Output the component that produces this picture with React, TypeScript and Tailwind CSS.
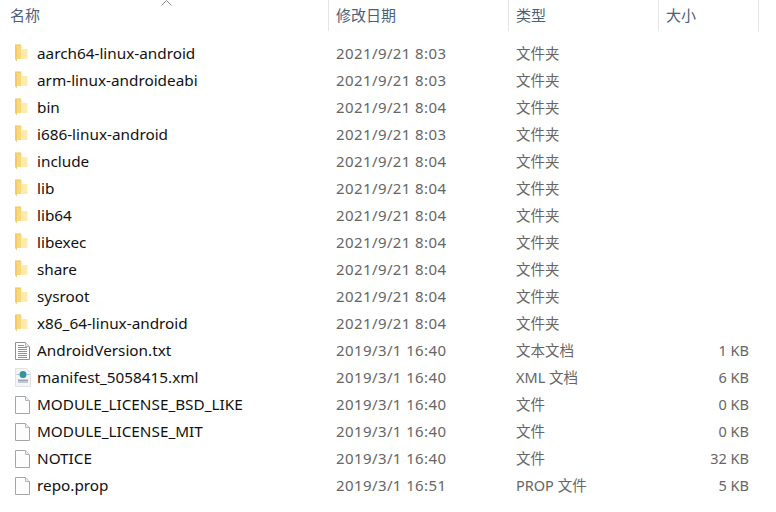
const sans = "font-['Noto_Sans','Noto_Sans_CJK_SC',sans-serif]";

type Kind = "folder" | "text" | "xml" | "blank";

interface Row {
  name: string;
  date: string;
  type: string;
  size?: string;
  kind: Kind;
}

const rows: Row[] = [
  { name: "aarch64-linux-android", date: "2021/9/21 8:03", type: "文件夹", kind: "folder" },
  { name: "arm-linux-androideabi", date: "2021/9/21 8:03", type: "文件夹", kind: "folder" },
  { name: "bin", date: "2021/9/21 8:04", type: "文件夹", kind: "folder" },
  { name: "i686-linux-android", date: "2021/9/21 8:03", type: "文件夹", kind: "folder" },
  { name: "include", date: "2021/9/21 8:04", type: "文件夹", kind: "folder" },
  { name: "lib", date: "2021/9/21 8:04", type: "文件夹", kind: "folder" },
  { name: "lib64", date: "2021/9/21 8:04", type: "文件夹", kind: "folder" },
  { name: "libexec", date: "2021/9/21 8:04", type: "文件夹", kind: "folder" },
  { name: "share", date: "2021/9/21 8:04", type: "文件夹", kind: "folder" },
  { name: "sysroot", date: "2021/9/21 8:04", type: "文件夹", kind: "folder" },
  { name: "x86_64-linux-android", date: "2021/9/21 8:04", type: "文件夹", kind: "folder" },
  { name: "AndroidVersion.txt", date: "2019/3/1 16:40", type: "文本文档", size: "1 KB", kind: "text" },
  { name: "manifest_5058415.xml", date: "2019/3/1 16:40", type: "XML 文档", size: "6 KB", kind: "xml" },
  { name: "MODULE_LICENSE_BSD_LIKE", date: "2019/3/1 16:40", type: "文件", size: "0 KB", kind: "blank" },
  { name: "MODULE_LICENSE_MIT", date: "2019/3/1 16:40", type: "文件", size: "0 KB", kind: "blank" },
  { name: "NOTICE", date: "2019/3/1 16:40", type: "文件", size: "32 KB", kind: "blank" },
  { name: "repo.prop", date: "2019/3/1 16:51", type: "PROP 文件", size: "5 KB", kind: "blank" },
];

function FileIcon({ kind }: { kind: Kind }) {
  if (kind === "folder") {
    return (
      <svg width="13" height="18" viewBox="0 0 13 18" className="block -mt-[2px]">
        <path d="M0 1h6l.5 1v13H2L0 14z" fill="#f8d878" />
        <path d="M6.5 5H12.5v10H6.5z" fill="#fdeaae" />
        <path d="M0 1v14l2 2.5V3z" fill="#f2ca66" />
        <path d="M0 0.5h6v1H0z" fill="#eec252" />
      </svg>
    );
  }
  if (kind === "xml") {
    return (
      <svg width="18" height="19" viewBox="0 0 18 19" className="block -ml-[1px]">
        <path d="M1.5 0.5h11l4 4v14h-15z" fill="#f3f5f6" stroke="#e0e2e3" />
        <path d="M4 11.5h10v1.5H4z" fill="#9fa4b5" />
        <path d="M4 13h10v2H4z" fill="#c5c8d2" />
        <path d="M2.5 6.5h2.5M13 6.5h2.5" stroke="#a9c0cf" />
        <circle cx="9" cy="6.5" r="3.5" fill="#2f8fc9" />
        <path d="M6.5 4.5c1.5-1 3.2-.6 3.2.5L8 7.5 6.5 6.5zM9.8 8.5l1.6-1.7.6.8-1.3 1.9z" fill="#37a24a" />
      </svg>
    );
  }
  return (
    <svg width="15" height="18" viewBox="0 0 15 18" className="block">
      <path d="M0.5 0.5h10l4 4v13H0.5z" fill="#fdfdfd" stroke={kind === "text" ? "#8e9195" : "#a3a6a9"} />
      <path d="M10.5 0.5v4h4" fill="#eeeeef" stroke="#b4b6b9" />
      {kind === "text" && (
        <path
          d="M3 3.5h6M3 5.5h9M3 7.5h9M3 9.5h9M3 11.5h9M3 13.5h9M3 15.5h9"
          stroke="#8e9195"
        />
      )}
    </svg>
  );
}

function HeaderCell({ label, className }: { label: string; className: string }) {
  return (
    <div className={`h-[31px] flex items-center border-r border-[#e5e5e5] text-[15px] text-[#4c607a] ${className}`}>
      <span className="-mt-[1px]">{label}</span>
    </div>
  );
}

export default function App() {
  return (
    <div className={`relative w-[776px] h-[512px] overflow-hidden bg-white ${sans}`}>
      <svg width="11" height="6" viewBox="0 0 11 6" className="absolute left-[161px] top-0">
        <path d="M0.5 5.5L5.5 0.5L10.5 5.5" fill="none" stroke="#8b8b8b" />
      </svg>
      <div className="flex">
        <HeaderCell label="名称" className="w-[329px] pl-[10px]" />
        <HeaderCell label="修改日期" className="w-[180px] pl-[7px]" />
        <HeaderCell label="类型" className="w-[150px] pl-[7px]" />
        <HeaderCell label="大小" className="w-[100px] pl-[7px]" />
      </div>
      <div className="pt-[9px]">
        {rows.map((row) => (
          <div key={row.name} className="flex h-[27px] items-center text-[14.5px] leading-none">
            <div className="w-[329px] flex items-center">
              <div className="w-[37px] pl-[15px] flex items-center">
                <FileIcon kind={row.kind} />
              </div>
              <span className="text-[15.3px] text-[#111111] whitespace-nowrap">{row.name}</span>
            </div>
            <div className="w-[180px] pl-[7px] text-[15px] tracking-[0.4px] text-[#666666] whitespace-nowrap">{row.date}</div>
            <div className="w-[150px] pl-[7px] text-[#666666] whitespace-nowrap">{row.type}</div>
            <div className="w-[90px] text-right text-[#666666]">{row.size}</div>
          </div>
        ))}
      </div>
    </div>
  );
}
